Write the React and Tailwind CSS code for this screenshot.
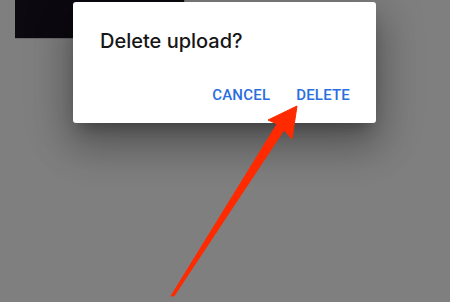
export default function App() {
  return (
    <div className="relative w-[450px] h-[302px] overflow-hidden bg-[#7f7f7f]">
      <div className="absolute left-[15px] top-0 w-[170px] h-[39px] bg-[#0c0a10] border-r border-b border-[#6a6a6a]" />
      <div className="absolute left-[73px] top-[2px] w-[303px] h-[121px] rounded-[3px] bg-white flex flex-col shadow-[0_11px_15px_-7px_rgba(0,0,0,0.3),0_24px_38px_3px_rgba(0,0,0,0.2),0_9px_46px_8px_rgba(0,0,0,0.16)]">
        <div className="pl-[27px] pt-[27px] text-[20px] leading-[24px] font-medium text-[#161616] font-['Inter',sans-serif]">
          Delete upload?
        </div>
        <div className="flex justify-end gap-[26px] pr-[26px] pt-[33px] font-['Roboto',sans-serif] font-medium text-[15px] leading-[18px] tracking-[0.2px] text-[#2a6ee0]">
          <span>CANCEL</span>
          <span>DELETE</span>
        </div>
      </div>
      <svg className="absolute left-0 top-0" width="450" height="302" viewBox="0 0 450 302">
        <polygon
          points="297,106 292,139 284,130 174,296 171,296 277,124 268,120"
          fill="#ff2a00"
          stroke="#ff2a00"
          strokeWidth="1"
          strokeLinejoin="round"
        />
      </svg>
    </div>
  );
}
